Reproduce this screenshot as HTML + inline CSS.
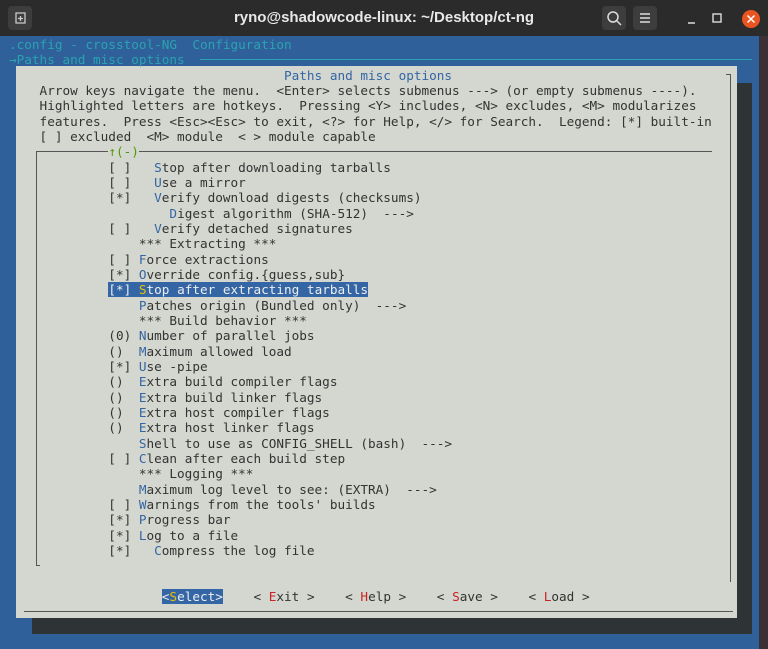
<!DOCTYPE html>
<html><head><meta charset="utf-8"><style>
*{margin:0;padding:0}
body{width:768px;height:649px;overflow:hidden;background:#2f6099;position:relative;font-family:"DejaVu Sans Mono","Liberation Mono",monospace}
.tb{position:absolute;left:0;top:0;width:768px;height:36px;background:#2b2b2b}
.title{position:absolute;left:0;width:768px;top:9px;text-align:center;color:#e8e8e8;font:bold 15px "Liberation Sans",sans-serif}
.btn{position:absolute;top:6px;width:24px;height:24px;border-radius:4px;background:#3d3d3d}
.rb{position:absolute;right:0;top:36px;width:9px;height:613px;background:#3a3036}
pre{position:absolute;left:9px;top:37px;font-size:12.7px;line-height:15.33px;color:#333;white-space:pre;font-family:"DejaVu Sans Mono","Liberation Mono",monospace}
.c{color:#2aa3b0}.t{color:#3465a4}.b{color:#3465a4}.r{color:#cc2222}.g{color:#4e9a06}
.hl{background:#3465a4;color:#eee}.y{color:#e5c100}
.dlg{position:absolute;left:16px;top:66px;width:721px;height:552px;background:#d3d7cf}
.sh1{position:absolute;left:737px;top:83px;width:15px;height:551px;background:#2e3436}
.sh2{position:absolute;left:32px;top:618px;width:720px;height:16px;background:#2e3436}
.ln{position:absolute;background:#555}
</style></head><body>
<div class="tb">
<div class="btn" style="left:8px;"><svg width="24" height="24"><path d="M8 7h9v10H8zM12.5 10v5M10 12.5h5" fill="none" stroke="#ccc" stroke-width="1.3"/></svg></div>
<div class="title">ryno@shadowcode-linux: ~/Desktop/ct-ng</div>
<div class="btn" style="left:602px;"><svg width="24" height="24"><circle cx="11" cy="11" r="5" fill="none" stroke="#ddd" stroke-width="1.5"/><path d="M15 15l4 4" stroke="#ddd" stroke-width="1.5"/></svg></div>
<div class="btn" style="left:633px;"><svg width="24" height="24"><path d="M7 8h10M7 12h10M7 16h10" stroke="#ddd" stroke-width="1.5"/></svg></div>
<svg style="position:absolute;left:680px;top:8px" width="88" height="22"><path d="M8 15h7" stroke="#ddd" stroke-width="1.5"/><rect x="33" y="6" width="8" height="8" fill="none" stroke="#ddd" stroke-width="1.4"/><circle cx="71" cy="11" r="9" fill="#e95420"/><path d="M67.5 7.5l7 7M74.5 7.5l-7 7" stroke="#fff" stroke-width="1.5"/></svg>
</div>
<div class="rb"></div>
<div class="ln" style="left:200px;top:59px;width:552px;height:1px;background:#2aa3b0"></div>
<div class="sh1"></div><div class="sh2"></div>
<div class="dlg"></div>
<div class="ln" style="left:36px;top:151px;width:676px;height:1px"></div>
<div class="ln" style="left:36px;top:151px;width:1px;height:414px"></div>
<div class="ln" style="left:36px;top:565px;width:4px;height:1px"></div>
<div class="ln" style="left:730px;top:74px;width:1px;height:508px"></div>
<div class="ln" style="left:726px;top:74px;width:4px;height:1px"></div>
<div class="ln" style="left:24px;top:611px;width:709px;height:1px"></div>
<pre><span class="c">.config - crosstool-NG  Configuration</span>
<span class="c">→Paths and misc options</span>
                                    <span class="t">Paths and misc options</span>
    Arrow keys navigate the menu.  &lt;Enter&gt; selects submenus ---&gt; (or empty submenus ----).
    Highlighted letters are hotkeys.  Pressing &lt;Y&gt; includes, &lt;N&gt; excludes, &lt;M&gt; modularizes
    features.  Press &lt;Esc&gt;&lt;Esc&gt; to exit, &lt;?&gt; for Help, &lt;/&gt; for Search.  Legend: [*] built-in
    [ ] excluded  &lt;M&gt; module  &lt; &gt; module capable
             <span class="g" style="background:#d3d7cf">↑(-)</span>
             [ ]   <span class="b">S</span>top after downloading tarballs
             [ ]   <span class="b">U</span>se a mirror
             [*]   <span class="b">V</span>erify download digests (checksums)
                     <span class="b">D</span>igest algorithm (SHA-512)  ---&gt;
             [ ]   <span class="b">V</span>erify detached signatures
                 *** Extracting ***
             [ ] <span class="b">F</span>orce extractions
             [*] <span class="b">O</span>verride config.{guess,sub}
             <span class="hl">[*] <span class="y">S</span>top after extracting tarballs</span>
                 <span class="b">P</span>atches origin (Bundled only)  ---&gt;
                 *** Build behavior ***
             (0) <span class="b">N</span>umber of parallel jobs
             ()  <span class="b">M</span>aximum allowed load
             [*] <span class="b">U</span>se -pipe
             ()  <span class="b">E</span>xtra build compiler flags
             ()  <span class="b">E</span>xtra build linker flags
             ()  <span class="b">E</span>xtra host compiler flags
             ()  <span class="b">E</span>xtra host linker flags
                 <span class="b">S</span>hell to use as CONFIG_SHELL (bash)  ---&gt;
             [ ] <span class="b">C</span>lean after each build step
                 *** Logging ***
                 <span class="b">M</span>aximum log level to see: (EXTRA)  ---&gt;
             [ ] <span class="b">W</span>arnings from the tools' builds
             [*] <span class="b">P</span>rogress bar
             [*] <span class="b">L</span>og to a file
             [*]   <span class="b">C</span>ompress the log file


                    <span class="hl">&lt;<span class="y">S</span>elect&gt;</span>    &lt; <span class="r">E</span>xit &gt;    &lt; <span class="r">H</span>elp &gt;    &lt; <span class="r">S</span>ave &gt;    &lt; <span class="r">L</span>oad &gt;</pre>
</body></html>
